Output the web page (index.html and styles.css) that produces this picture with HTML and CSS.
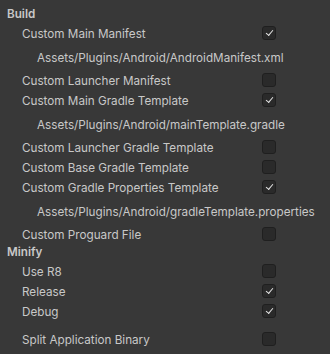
FILE: index.html
```html
<!DOCTYPE html>
<html lang="en">
<head>
  <meta charset="UTF-8" />
  <title>Publishing Settings</title>
  <link rel="stylesheet" href="styles.css">
</head>
<body>
  <div class="settings">
    <div class="section-title">Build</div>
    <div class="row"><span>Custom Main Manifest</span><span class="toggle on"></span></div>
    <div class="path">Assets/Plugins/Android/AndroidManifest.xml</div>
    <div class="row"><span>Custom Launcher Manifest</span><span class="toggle"></span></div>
    <div class="row"><span>Custom Main Gradle Template</span><span class="toggle on"></span></div>
    <div class="path">Assets/Plugins/Android/mainTemplate.gradle</div>
    <div class="row"><span>Custom Launcher Gradle Template</span><span class="toggle"></span></div>
    <div class="row"><span>Custom Base Gradle Template</span><span class="toggle"></span></div>
    <div class="row"><span>Custom Gradle Properties Template</span><span class="toggle on"></span></div>
    <div class="path">Assets/Plugins/Android/gradleTemplate.properties</div>
    <div class="row"><span>Custom Proguard File</span><span class="toggle"></span></div>

    <div class="section-title">Minify</div>
    <div class="row"><span>Use R8</span><span class="toggle"></span></div>
    <div class="row"><span>Release</span><span class="toggle on"></span></div>
    <div class="row"><span>Debug</span><span class="toggle on"></span></div>

    <div class="row spaced"><span>Split Application Binary</span><span class="toggle"></span></div>
  </div>
</body>
</html>
```

FILE: styles.css
```css
:root {
  --panel-bg: #383838;
  --label: #c8c8c8;
  --toggle-bg: #2a2a2a;
  --toggle-border: #1f1f1f;
}
body {
  margin: 0;
  background: var(--panel-bg);
  color: var(--label);
  font-family: Inter, "Noto Sans", sans-serif;
  font-size: 11.7px;
}
.settings {
  padding: 6px 0 0 7px;
}
.section-title {
  height: 17px;
  line-height: 17px;
  font-weight: 600;
}
.row {
  display: flex;
  align-items: center;
  height: 20px;
  padding-left: 15px;
}
.row span:first-child {
  width: 240px;
  padding-top: 2px;
}
.row.spaced {
  margin-top: 8px;
}
.path {
  height: 20px;
  line-height: 20px;
  padding: 5px 0 2px 30px;
}
.toggle {
  box-sizing: border-box;
  width: 14px;
  height: 14px;
  background: var(--toggle-bg);
  border: 1px solid var(--toggle-border);
  border-radius: 3px;
  display: flex;
  align-items: center;
  justify-content: center;
}
.toggle.on::after {
  content: "";
  width: 6px;
  height: 3px;
  border-left: 1.6px solid #e4e4e4;
  border-bottom: 1.6px solid #e4e4e4;
  transform: translateY(-1px) rotate(-50deg);
}
```
